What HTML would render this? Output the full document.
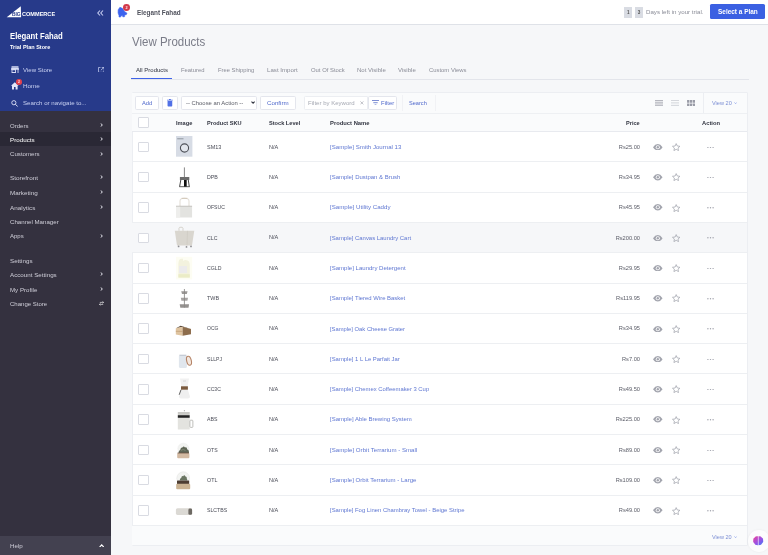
<!DOCTYPE html>
<html><head><meta charset="utf-8"><title>View Products</title>
<style>
*{margin:0;padding:0;box-sizing:border-box}
html,body{width:768px;height:555px;overflow:hidden;background:#f6f7f9;font-family:"Liberation Sans", sans-serif;}
.t{position:absolute;white-space:nowrap;line-height:1;}
.a{position:absolute}
</style></head>
<body>
<div class="a" style="left:0px;top:0px;width:111px;height:555px;background:#34313f;"></div>
<div class="a" style="left:0px;top:0px;width:111px;height:111.3px;background:#273a8a;"></div>
<div class="a" style="left:0px;top:132.1px;width:111px;height:14.4px;background:#2a2835;"></div>
<div class="a" style="left:0px;top:536px;width:111px;height:19px;background:#434150;"></div>
<svg class="a" style="left:6px;top:6px;will-change:transform" width="17" height="12.5" viewBox="0 0 17 12.5"><path d="M0.7 11.3 L14.8 0.2 L15.1 11.3 Z" fill="#fff"/><text x="5.9" y="10.2" font-family="Liberation Sans" font-weight="700" font-size="4.9" fill="#273a8a">BIG</text></svg>
<svg class="a" style="left:97px;top:10.3px" width="7" height="6" viewBox="0 0 7 6"><path d="M3 0.5 L0.8 3 L3 5.5 M6 0.5 L3.8 3 L6 5.5" fill="none" stroke="#c5ccf0" stroke-width="1.1"/></svg>
<svg class="a" style="left:11px;top:66px" width="8" height="7.1" viewBox="0 0 9 7.6" preserveAspectRatio="none"><path d="M0.6 0 H8.4 V0.9 H0.6Z M0.6 1.3 H8.4 L9 3.3 V4 H8.4 V7.6 H7.4 V4 H5.6 V7.6 H0.6 V4 H0 V3.3 Z M1.6 4.6 V6.4 H4.6 V4.6 Z" fill="#d7dcf5" fill-rule="evenodd"/></svg>
<svg class="a" style="left:97.9px;top:66.6px" width="6.4" height="5.8" viewBox="0 0 6.6 6.6" preserveAspectRatio="none"><path d="M2.6 0.6 H0.5 V6.1 H6.1 V3.9 M3.8 0.5 H6.1 V2.8 M6 0.6 L3 3.6" fill="none" stroke="#c9d1f2" stroke-width="0.8"/></svg>
<svg class="a" style="left:11px;top:82.4px" width="7.6" height="7.6" viewBox="0 0 7.6 7.6"><path d="M3.8 0.3 L0 3.7 H1 V7.4 H3 V4.9 H4.6 V7.4 H6.6 V3.7 H7.6 Z" fill="#e3e7fa"/></svg>
<div class="a" style="left:16.2px;top:79.2px;width:5.4px;height:5.4px;background:#e0424f;border-radius:50%;"></div>
<svg class="a" style="left:11.1px;top:99.6px" width="7.3" height="7" viewBox="0 0 8 8"><circle cx="3.1" cy="3.1" r="2.4" fill="none" stroke="#e3e7fa" stroke-width="1"/><path d="M4.9 4.9 L7.5 7.5" stroke="#e3e7fa" stroke-width="1.1"/></svg>
<svg class="a" style="left:99.5px;top:122.6px" width="3.2" height="4" viewBox="0 0 3.2 4"><path d="M0.7 0.5 L2.4 2 L0.7 3.5" fill="none" stroke="#e2e2ea" stroke-width="1"/></svg>
<svg class="a" style="left:99.5px;top:136.8px" width="3.2" height="4" viewBox="0 0 3.2 4"><path d="M0.7 0.5 L2.4 2 L0.7 3.5" fill="none" stroke="#e2e2ea" stroke-width="1"/></svg>
<svg class="a" style="left:99.5px;top:151.5px" width="3.2" height="4" viewBox="0 0 3.2 4"><path d="M0.7 0.5 L2.4 2 L0.7 3.5" fill="none" stroke="#e2e2ea" stroke-width="1"/></svg>
<svg class="a" style="left:99.5px;top:175.3px" width="3.2" height="4" viewBox="0 0 3.2 4"><path d="M0.7 0.5 L2.4 2 L0.7 3.5" fill="none" stroke="#e2e2ea" stroke-width="1"/></svg>
<svg class="a" style="left:99.5px;top:189.9px" width="3.2" height="4" viewBox="0 0 3.2 4"><path d="M0.7 0.5 L2.4 2 L0.7 3.5" fill="none" stroke="#e2e2ea" stroke-width="1"/></svg>
<svg class="a" style="left:99.5px;top:204.6px" width="3.2" height="4" viewBox="0 0 3.2 4"><path d="M0.7 0.5 L2.4 2 L0.7 3.5" fill="none" stroke="#e2e2ea" stroke-width="1"/></svg>
<svg class="a" style="left:99.5px;top:233.5px" width="3.2" height="4" viewBox="0 0 3.2 4"><path d="M0.7 0.5 L2.4 2 L0.7 3.5" fill="none" stroke="#e2e2ea" stroke-width="1"/></svg>
<svg class="a" style="left:99.5px;top:272.4px" width="3.2" height="4" viewBox="0 0 3.2 4"><path d="M0.7 0.5 L2.4 2 L0.7 3.5" fill="none" stroke="#e2e2ea" stroke-width="1"/></svg>
<svg class="a" style="left:99.5px;top:286.7px" width="3.2" height="4" viewBox="0 0 3.2 4"><path d="M0.7 0.5 L2.4 2 L0.7 3.5" fill="none" stroke="#e2e2ea" stroke-width="1"/></svg>
<svg class="a" style="left:98.6px;top:301.3px" width="5" height="5" viewBox="0 0 5 5"><path d="M0.4 3.4 H4.2 M1.4 2.4 L0.4 3.4 L1.4 4.4 M4.6 1.4 H0.8 M3.6 0.4 L4.6 1.4 L3.6 2.4" fill="none" stroke="#fff" stroke-width="0.6"/></svg>
<svg class="a" style="left:98.8px;top:543.6px" width="5.4" height="3.8" viewBox="0 0 5.4 3.8"><path d="M0.6 3.2 L2.7 0.9 L4.8 3.2" fill="none" stroke="#fff" stroke-width="1.1"/></svg>
<div class="a" style="left:111px;top:0px;width:657px;height:24.5px;background:#fff;border-bottom:1px solid #dfe2e8;"></div>
<svg class="a" style="left:0;top:0" width="140" height="24" viewBox="0 0 140 24"><path d="M118.2 9.8 L119.9 7.3 L122.6 8.4 L124.8 11.8 L127 13.2 L126.2 14.8 L124.4 14.9 L124.7 16.6 L122.9 16.9 L122.5 15.6 L120.7 15.9 L120.7 17 L119 17 L119 15.4 L118.1 13 Z" fill="#3d63ee" stroke="#3d63ee" stroke-width="0.6" stroke-linejoin="round"/></svg>
<div class="a" style="left:123.1px;top:3.9px;width:6.9px;height:6.9px;background:#d23a4b;border-radius:50%;"></div>
<div class="a" style="left:624px;top:6.5px;width:8.3px;height:11px;background:#d9dce3;"></div>
<div class="a" style="left:634.7px;top:6.5px;width:8.3px;height:11px;background:#d9dce3;"></div>
<div class="a" style="left:710px;top:4.3px;width:54.5px;height:15px;background:#3b60e2;border-radius:1.6px;"></div>
<div class="a" style="left:131px;top:78.8px;width:617.5px;height:0.8px;background:#e3e5eb;"></div>
<div class="a" style="left:131.2px;top:77.7px;width:40.6px;height:1.6px;background:#3f63e8;"></div>
<div class="a" style="left:131.6px;top:92.4px;width:616px;height:453.4px;background:#fff;border:1px solid #eceef2;border-radius:1px;"></div>
<div class="a" style="left:132.2px;top:93px;width:614.6px;height:38.4px;background:#fafbfc;"></div>
<div class="a" style="left:132.2px;top:112.5px;width:614.6px;height:0.7px;background:#eef0f3;"></div>
<div class="a" style="left:132.2px;top:131.1px;width:614.6px;height:0.7px;background:#e8eaef;"></div>
<div class="a" style="left:132px;top:525.6px;width:615.2px;height:19.8px;background:#fafbfc;"></div>
<div class="a" style="left:134.8px;top:95.6px;width:24.2px;height:14px;background:#fff;border:1px solid #e4e6ed;border-radius:1.6px;"></div>
<div class="a" style="left:162px;top:95.6px;width:15.5px;height:14px;background:#fff;border:1px solid #e4e6ed;border-radius:1.6px;"></div>
<div class="a" style="left:180.5px;top:95.6px;width:76.8px;height:14px;background:#fff;border:1px solid #e4e6ed;border-radius:1.6px;"></div>
<div class="a" style="left:260.2px;top:95.6px;width:35.5px;height:14px;background:#fff;border:1px solid #e4e6ed;border-radius:1.6px;"></div>
<div class="a" style="left:304.2px;top:96px;width:64px;height:13.8px;background:#fff;border:1px solid #eceef2;border-radius:1.4px 0 0 1.4px;"></div>
<div class="a" style="left:368px;top:96px;width:29.3px;height:13.8px;background:#fff;border:1px solid #e4e6ed;border-radius:1.6px;"></div>
<div class="a" style="left:401.6px;top:95px;width:0.5px;height:16px;background:#f1f2f5;"></div>
<div class="a" style="left:435.3px;top:95px;width:0.5px;height:16px;background:#f1f2f5;"></div>
<div class="a" style="left:702.5px;top:93px;width:0.6px;height:19.6px;background:#eceef2;"></div>
<svg class="a" style="left:166.9px;top:99px" width="5.8" height="7.6" viewBox="0 0 6.4 8.4"><path d="M2.2 0 H4.2 V0.7 H6.4 V1.7 H0 V0.7 H2.2 Z M0.6 2.3 H5.8 V7.6 Q5.8 8.4 5 8.4 H1.4 Q0.6 8.4 0.6 7.6 Z" fill="#5070e6"/></svg>
<svg class="a" style="left:250.8px;top:101.2px" width="4.2" height="3" viewBox="0 0 4.2 3"><path d="M0.5 0.6 L2.1 2.2 L3.7 0.6" fill="none" stroke="#313440" stroke-width="1.1"/></svg>
<svg class="a" style="left:360.2px;top:100.8px" width="3.8" height="3.8" viewBox="0 0 3.8 3.8"><path d="M0.4 0.4 L3.4 3.4 M3.4 0.4 L0.4 3.4" stroke="#9a9ca7" stroke-width="0.6"/></svg>
<svg class="a" style="left:371.6px;top:100px" width="7" height="5.4" viewBox="0 0 7 5.4"><path d="M0 0.5 H7 M1.3 2.7 H5.7 M2.6 4.9 H4.4" stroke="#5a70c8" stroke-width="0.8"/></svg>
<svg class="a" style="left:655.2px;top:99.9px" width="8.2" height="6.3" viewBox="0 0 8.2 7" preserveAspectRatio="none"><path d="M0 0.6 H8.2 M0 2.5 H8.2 M0 4.4 H8.2 M0 6.3 H8.2" stroke="#9a9ca7" stroke-width="0.8"/></svg>
<svg class="a" style="left:670.7px;top:100.2px" width="8.3" height="5.8" viewBox="0 0 8.2 6.4" preserveAspectRatio="none"><path d="M0 0.5 H8.2 M0 3.2 H8.2 M0 5.9 H8.2" stroke="#c6c8d0" stroke-width="0.8"/></svg>
<svg class="a" style="left:687px;top:99.9px" width="8.1" height="6.2" viewBox="0 0 8 6.2"><path d="M0 0 H2.3 V2.8 H0Z M2.85 0 H5.15 V2.8 H2.85Z M5.7 0 H8 V2.8 H5.7Z M0 3.4 H2.3 V6.2 H0Z M2.85 3.4 H5.15 V6.2 H2.85Z M5.7 3.4 H8 V6.2 H5.7Z" fill="#9a9ca7"/></svg>
<svg class="a" style="left:734.0px;top:102.0px" width="3.2" height="2.2" viewBox="0 0 3.2 2.2"><path d="M0.3 0.4 L1.6 1.7 L2.9 0.4" fill="none" stroke="#6f8be6" stroke-width="0.6"/></svg>
<svg class="a" style="left:734.0px;top:536.0px" width="3.2" height="2.2" viewBox="0 0 3.2 2.2"><path d="M0.3 0.4 L1.6 1.7 L2.9 0.4" fill="none" stroke="#6f8be6" stroke-width="0.6"/></svg>
<div class="a" style="left:138.2px;top:117.3px;width:10.6px;height:10.6px;background:#fff;border:1px solid #d9dbe2;border-radius:1px;"></div>
<div class="a" style="left:132px;top:222.3px;width:615.2px;height:30.3px;background:#f6f7f9;"></div>
<div class="a" style="left:132px;top:161.35000000000002px;width:615.2px;height:0.7px;background:#edeff2;"></div>
<div class="a" style="left:138.2px;top:141.60000000000002px;width:10.5px;height:10.5px;background:#fff;border:1px solid #d9dbe2;border-radius:1px;"></div>
<svg class="a" style="left:653.2px;top:143.7px" width="9.6" height="6.5" viewBox="0 0 10 6.8"><path d="M0 3.4 Q2.2 0 5 0 Q7.8 0 10 3.4 Q7.8 6.8 5 6.8 Q2.2 6.8 0 3.4 Z" fill="#a3a5ae"/><circle cx="5" cy="3.4" r="2.1" fill="#fff"/><circle cx="5" cy="3.4" r="1.25" fill="#a3a5ae"/></svg>
<svg class="a" style="left:671.9px;top:142.9px" width="8.4" height="8" viewBox="0 0 8.4 8"><path d="M4.2 0.6 L5.3 3 L7.9 3.3 L6 5.1 L6.5 7.6 L4.2 6.3 L1.9 7.6 L2.4 5.1 L0.5 3.3 L3.1 3 Z" fill="none" stroke="#9b9da7" stroke-width="0.7" stroke-linejoin="round"/></svg>
<svg class="a" style="left:707.3px;top:146.5px" width="7" height="1.6" viewBox="0 0 7 1.6"><circle cx="0.9" cy="0.8" r="0.7" fill="#9fa1ab"/><circle cx="3.5" cy="0.8" r="0.7" fill="#9fa1ab"/><circle cx="6.1" cy="0.8" r="0.7" fill="#9fa1ab"/></svg>
<svg class="a" style="left:176px;top:136.4px;overflow:visible" width="16.4" height="20.7" viewBox="0 0 16.4 20.7"><rect x="0" y="0" width="16.4" height="20.7" fill="#d7dce5"/><rect x="1.2" y="2" width="6.3" height="1.4" fill="#8f95a0" opacity=".7"/><circle cx="8.5" cy="12" r="4.1" fill="#e2e6ed" stroke="#4d5058" stroke-width="1.1"/></svg>
<div class="a" style="left:132px;top:191.65000000000003px;width:615.2px;height:0.7px;background:#edeff2;"></div>
<div class="a" style="left:138.2px;top:171.90000000000003px;width:10.5px;height:10.5px;background:#fff;border:1px solid #d9dbe2;border-radius:1px;"></div>
<svg class="a" style="left:653.2px;top:174.0px" width="9.6" height="6.5" viewBox="0 0 10 6.8"><path d="M0 3.4 Q2.2 0 5 0 Q7.8 0 10 3.4 Q7.8 6.8 5 6.8 Q2.2 6.8 0 3.4 Z" fill="#a3a5ae"/><circle cx="5" cy="3.4" r="2.1" fill="#fff"/><circle cx="5" cy="3.4" r="1.25" fill="#a3a5ae"/></svg>
<svg class="a" style="left:671.9px;top:173.2px" width="8.4" height="8" viewBox="0 0 8.4 8"><path d="M4.2 0.6 L5.3 3 L7.9 3.3 L6 5.1 L6.5 7.6 L4.2 6.3 L1.9 7.6 L2.4 5.1 L0.5 3.3 L3.1 3 Z" fill="none" stroke="#9b9da7" stroke-width="0.7" stroke-linejoin="round"/></svg>
<svg class="a" style="left:707.3px;top:176.8px" width="7" height="1.6" viewBox="0 0 7 1.6"><circle cx="0.9" cy="0.8" r="0.7" fill="#9fa1ab"/><circle cx="3.5" cy="0.8" r="0.7" fill="#9fa1ab"/><circle cx="6.1" cy="0.8" r="0.7" fill="#9fa1ab"/></svg>
<svg class="a" style="left:176px;top:166.7px;overflow:visible" width="16.4" height="20.7" viewBox="0 0 16.4 20.7"><path d="M8.4 0.4 V10" stroke="#555" stroke-width="0.7"/><rect x="3.9" y="10" width="9.4" height="3" fill="#6c6c6c"/><path d="M4.8 13 L3.6 19.6 M12.3 13 L13.3 19.6" stroke="#333" stroke-width="0.9"/><rect x="8" y="13" width="2.7" height="6.8" fill="#111"/><path d="M3.3 19.7 H13.7" stroke="#333" stroke-width="0.8"/></svg>
<div class="a" style="left:132px;top:221.95000000000002px;width:615.2px;height:0.7px;background:#edeff2;"></div>
<div class="a" style="left:138.2px;top:202.20000000000002px;width:10.5px;height:10.5px;background:#fff;border:1px solid #d9dbe2;border-radius:1px;"></div>
<svg class="a" style="left:653.2px;top:204.3px" width="9.6" height="6.5" viewBox="0 0 10 6.8"><path d="M0 3.4 Q2.2 0 5 0 Q7.8 0 10 3.4 Q7.8 6.8 5 6.8 Q2.2 6.8 0 3.4 Z" fill="#a3a5ae"/><circle cx="5" cy="3.4" r="2.1" fill="#fff"/><circle cx="5" cy="3.4" r="1.25" fill="#a3a5ae"/></svg>
<svg class="a" style="left:671.9px;top:203.5px" width="8.4" height="8" viewBox="0 0 8.4 8"><path d="M4.2 0.6 L5.3 3 L7.9 3.3 L6 5.1 L6.5 7.6 L4.2 6.3 L1.9 7.6 L2.4 5.1 L0.5 3.3 L3.1 3 Z" fill="none" stroke="#9b9da7" stroke-width="0.7" stroke-linejoin="round"/></svg>
<svg class="a" style="left:707.3px;top:207.1px" width="7" height="1.6" viewBox="0 0 7 1.6"><circle cx="0.9" cy="0.8" r="0.7" fill="#9fa1ab"/><circle cx="3.5" cy="0.8" r="0.7" fill="#9fa1ab"/><circle cx="6.1" cy="0.8" r="0.7" fill="#9fa1ab"/></svg>
<svg class="a" style="left:176px;top:197.0px;overflow:visible" width="16.4" height="20.7" viewBox="0 0 16.4 20.7"><path d="M4 9 V4 Q4 1.2 8.4 1.2 Q13 1.2 13 4 V9" fill="none" stroke="#e4dfd8" stroke-width="1.1"/><path d="M5.6 1.3 H11.4" stroke="#cfc3b3" stroke-width="0.9"/><rect x="0" y="9" width="16.1" height="11.5" fill="#e3e3e0"/><rect x="0" y="9" width="4.2" height="11.5" fill="#eeeeec"/><path d="M0 9.2 H16.1" stroke="#b8b4af" stroke-width="0.7"/></svg>
<div class="a" style="left:132px;top:252.25000000000003px;width:615.2px;height:0.7px;background:#edeff2;"></div>
<div class="a" style="left:138.2px;top:232.50000000000003px;width:10.5px;height:10.5px;background:#fff;border:1px solid #d9dbe2;border-radius:1px;"></div>
<svg class="a" style="left:653.2px;top:234.6px" width="9.6" height="6.5" viewBox="0 0 10 6.8"><path d="M0 3.4 Q2.2 0 5 0 Q7.8 0 10 3.4 Q7.8 6.8 5 6.8 Q2.2 6.8 0 3.4 Z" fill="#a3a5ae"/><circle cx="5" cy="3.4" r="2.1" fill="#fff"/><circle cx="5" cy="3.4" r="1.25" fill="#a3a5ae"/></svg>
<svg class="a" style="left:671.9px;top:233.8px" width="8.4" height="8" viewBox="0 0 8.4 8"><path d="M4.2 0.6 L5.3 3 L7.9 3.3 L6 5.1 L6.5 7.6 L4.2 6.3 L1.9 7.6 L2.4 5.1 L0.5 3.3 L3.1 3 Z" fill="none" stroke="#9b9da7" stroke-width="0.7" stroke-linejoin="round"/></svg>
<svg class="a" style="left:707.3px;top:237.4px" width="7" height="1.6" viewBox="0 0 7 1.6"><circle cx="0.9" cy="0.8" r="0.7" fill="#9fa1ab"/><circle cx="3.5" cy="0.8" r="0.7" fill="#9fa1ab"/><circle cx="6.1" cy="0.8" r="0.7" fill="#9fa1ab"/></svg>
<svg class="a" style="left:176px;top:227.3px;overflow:visible" width="16.4" height="20.7" viewBox="0 0 16.4 20.7"><path d="M3 3.9 V1.2 Q3 0.2 5 0.2 Q7 0.2 7 1.2 V3.9" fill="none" stroke="#d2cfc8" stroke-width="0.9"/><path d="M-1.2 3.8 H18.3 L16 18.6 H1 Z" fill="#d9d6cf"/><path d="M11.5 3.8 L11 18.6" stroke="#cbc8c0" stroke-width="0.6"/><circle cx="2.6" cy="19.4" r="0.9" fill="#8f8f92"/><circle cx="10.5" cy="19.9" r="0.9" fill="#8f8f92"/><circle cx="15" cy="19.4" r="0.9" fill="#8f8f92"/></svg>
<div class="a" style="left:132px;top:282.55px;width:615.2px;height:0.7px;background:#edeff2;"></div>
<div class="a" style="left:138.2px;top:262.8px;width:10.5px;height:10.5px;background:#fff;border:1px solid #d9dbe2;border-radius:1px;"></div>
<svg class="a" style="left:653.2px;top:264.9px" width="9.6" height="6.5" viewBox="0 0 10 6.8"><path d="M0 3.4 Q2.2 0 5 0 Q7.8 0 10 3.4 Q7.8 6.8 5 6.8 Q2.2 6.8 0 3.4 Z" fill="#a3a5ae"/><circle cx="5" cy="3.4" r="2.1" fill="#fff"/><circle cx="5" cy="3.4" r="1.25" fill="#a3a5ae"/></svg>
<svg class="a" style="left:671.9px;top:264.1px" width="8.4" height="8" viewBox="0 0 8.4 8"><path d="M4.2 0.6 L5.3 3 L7.9 3.3 L6 5.1 L6.5 7.6 L4.2 6.3 L1.9 7.6 L2.4 5.1 L0.5 3.3 L3.1 3 Z" fill="none" stroke="#9b9da7" stroke-width="0.7" stroke-linejoin="round"/></svg>
<svg class="a" style="left:707.3px;top:267.7px" width="7" height="1.6" viewBox="0 0 7 1.6"><circle cx="0.9" cy="0.8" r="0.7" fill="#9fa1ab"/><circle cx="3.5" cy="0.8" r="0.7" fill="#9fa1ab"/><circle cx="6.1" cy="0.8" r="0.7" fill="#9fa1ab"/></svg>
<svg class="a" style="left:176px;top:257.6px;overflow:visible" width="16.4" height="20.7" viewBox="0 0 16.4 20.7"><rect x="0" y="-1.2" width="16.2" height="22.6" fill="#fdfdf3"/><path d="M2.4 19.6 V6 Q2.4 1 5 0.8 H7 V3 Q9 1.6 11.5 2.4 Q13.8 3.2 13.8 7 V19.6 Z" fill="#f3f2de"/><rect x="3" y="8" width="8" height="7" fill="#eae8ef" opacity=".8"/><rect x="2.4" y="16.2" width="11.4" height="3.4" fill="#ebecc6"/></svg>
<div class="a" style="left:132px;top:312.84999999999997px;width:615.2px;height:0.7px;background:#edeff2;"></div>
<div class="a" style="left:138.2px;top:293.09999999999997px;width:10.5px;height:10.5px;background:#fff;border:1px solid #d9dbe2;border-radius:1px;"></div>
<svg class="a" style="left:653.2px;top:295.2px" width="9.6" height="6.5" viewBox="0 0 10 6.8"><path d="M0 3.4 Q2.2 0 5 0 Q7.8 0 10 3.4 Q7.8 6.8 5 6.8 Q2.2 6.8 0 3.4 Z" fill="#a3a5ae"/><circle cx="5" cy="3.4" r="2.1" fill="#fff"/><circle cx="5" cy="3.4" r="1.25" fill="#a3a5ae"/></svg>
<svg class="a" style="left:671.9px;top:294.4px" width="8.4" height="8" viewBox="0 0 8.4 8"><path d="M4.2 0.6 L5.3 3 L7.9 3.3 L6 5.1 L6.5 7.6 L4.2 6.3 L1.9 7.6 L2.4 5.1 L0.5 3.3 L3.1 3 Z" fill="none" stroke="#9b9da7" stroke-width="0.7" stroke-linejoin="round"/></svg>
<svg class="a" style="left:707.3px;top:298.0px" width="7" height="1.6" viewBox="0 0 7 1.6"><circle cx="0.9" cy="0.8" r="0.7" fill="#9fa1ab"/><circle cx="3.5" cy="0.8" r="0.7" fill="#9fa1ab"/><circle cx="6.1" cy="0.8" r="0.7" fill="#9fa1ab"/></svg>
<svg class="a" style="left:176px;top:287.9px;overflow:visible" width="16.4" height="20.7" viewBox="0 0 16.4 20.7"><path d="M8.4 1 V19.6" stroke="#6f6b69" stroke-width="0.7"/><path d="M5.2 3.2 H11.6 L10.8 6 H6 Z" fill="#8a8684" opacity=".85"/><path d="M4.8 9.7 H12 L11.4 12.7 H5.4 Z" fill="#8a8684" opacity=".75"/><path d="M3.7 16.2 H13.1 L12.5 19.7 H4.3 Z" fill="#8a8684" opacity=".9"/></svg>
<div class="a" style="left:132px;top:343.15000000000003px;width:615.2px;height:0.7px;background:#edeff2;"></div>
<div class="a" style="left:138.2px;top:323.40000000000003px;width:10.5px;height:10.5px;background:#fff;border:1px solid #d9dbe2;border-radius:1px;"></div>
<svg class="a" style="left:653.2px;top:325.5px" width="9.6" height="6.5" viewBox="0 0 10 6.8"><path d="M0 3.4 Q2.2 0 5 0 Q7.8 0 10 3.4 Q7.8 6.8 5 6.8 Q2.2 6.8 0 3.4 Z" fill="#a3a5ae"/><circle cx="5" cy="3.4" r="2.1" fill="#fff"/><circle cx="5" cy="3.4" r="1.25" fill="#a3a5ae"/></svg>
<svg class="a" style="left:671.9px;top:324.7px" width="8.4" height="8" viewBox="0 0 8.4 8"><path d="M4.2 0.6 L5.3 3 L7.9 3.3 L6 5.1 L6.5 7.6 L4.2 6.3 L1.9 7.6 L2.4 5.1 L0.5 3.3 L3.1 3 Z" fill="none" stroke="#9b9da7" stroke-width="0.7" stroke-linejoin="round"/></svg>
<svg class="a" style="left:707.3px;top:328.3px" width="7" height="1.6" viewBox="0 0 7 1.6"><circle cx="0.9" cy="0.8" r="0.7" fill="#9fa1ab"/><circle cx="3.5" cy="0.8" r="0.7" fill="#9fa1ab"/><circle cx="6.1" cy="0.8" r="0.7" fill="#9fa1ab"/></svg>
<svg class="a" style="left:176px;top:318.2px;overflow:visible" width="16.4" height="20.7" viewBox="0 0 16.4 20.7"><path d="M0 10.2 L4.6 7.7 L15 11 L6.6 9 Z" fill="#5b4a3a"/><path d="M-0.2 10.2 L6.6 8.8 V17.7 L-0.2 16.6 Z" fill="#dfc4a0"/><path d="M6.6 8.8 L15 11 V16.2 L6.6 17.7 Z" fill="#8d6d4c"/><path d="M-0.2 13.3 L6.6 13.4" stroke="#b8936a" stroke-width="0.6"/></svg>
<div class="a" style="left:132px;top:373.45px;width:615.2px;height:0.7px;background:#edeff2;"></div>
<div class="a" style="left:138.2px;top:353.7px;width:10.5px;height:10.5px;background:#fff;border:1px solid #d9dbe2;border-radius:1px;"></div>
<svg class="a" style="left:653.2px;top:355.8px" width="9.6" height="6.5" viewBox="0 0 10 6.8"><path d="M0 3.4 Q2.2 0 5 0 Q7.8 0 10 3.4 Q7.8 6.8 5 6.8 Q2.2 6.8 0 3.4 Z" fill="#a3a5ae"/><circle cx="5" cy="3.4" r="2.1" fill="#fff"/><circle cx="5" cy="3.4" r="1.25" fill="#a3a5ae"/></svg>
<svg class="a" style="left:671.9px;top:355.0px" width="8.4" height="8" viewBox="0 0 8.4 8"><path d="M4.2 0.6 L5.3 3 L7.9 3.3 L6 5.1 L6.5 7.6 L4.2 6.3 L1.9 7.6 L2.4 5.1 L0.5 3.3 L3.1 3 Z" fill="none" stroke="#9b9da7" stroke-width="0.7" stroke-linejoin="round"/></svg>
<svg class="a" style="left:707.3px;top:358.6px" width="7" height="1.6" viewBox="0 0 7 1.6"><circle cx="0.9" cy="0.8" r="0.7" fill="#9fa1ab"/><circle cx="3.5" cy="0.8" r="0.7" fill="#9fa1ab"/><circle cx="6.1" cy="0.8" r="0.7" fill="#9fa1ab"/></svg>
<svg class="a" style="left:176px;top:348.5px;overflow:visible" width="16.4" height="20.7" viewBox="0 0 16.4 20.7"><rect x="2.9" y="5.9" width="8" height="13.2" rx="1.6" fill="#e0e6ed"/><path d="M3.4 6.2 H10.4" stroke="#aab2bd" stroke-width="0.7"/><ellipse cx="13" cy="11.8" rx="2.3" ry="4.6" transform="rotate(-14 13 11.8)" fill="#f4e8df" stroke="#b58467" stroke-width="1.1"/></svg>
<div class="a" style="left:132px;top:403.75px;width:615.2px;height:0.7px;background:#edeff2;"></div>
<div class="a" style="left:138.2px;top:384.0px;width:10.5px;height:10.5px;background:#fff;border:1px solid #d9dbe2;border-radius:1px;"></div>
<svg class="a" style="left:653.2px;top:386.1px" width="9.6" height="6.5" viewBox="0 0 10 6.8"><path d="M0 3.4 Q2.2 0 5 0 Q7.8 0 10 3.4 Q7.8 6.8 5 6.8 Q2.2 6.8 0 3.4 Z" fill="#a3a5ae"/><circle cx="5" cy="3.4" r="2.1" fill="#fff"/><circle cx="5" cy="3.4" r="1.25" fill="#a3a5ae"/></svg>
<svg class="a" style="left:671.9px;top:385.3px" width="8.4" height="8" viewBox="0 0 8.4 8"><path d="M4.2 0.6 L5.3 3 L7.9 3.3 L6 5.1 L6.5 7.6 L4.2 6.3 L1.9 7.6 L2.4 5.1 L0.5 3.3 L3.1 3 Z" fill="none" stroke="#9b9da7" stroke-width="0.7" stroke-linejoin="round"/></svg>
<svg class="a" style="left:707.3px;top:388.9px" width="7" height="1.6" viewBox="0 0 7 1.6"><circle cx="0.9" cy="0.8" r="0.7" fill="#9fa1ab"/><circle cx="3.5" cy="0.8" r="0.7" fill="#9fa1ab"/><circle cx="6.1" cy="0.8" r="0.7" fill="#9fa1ab"/></svg>
<svg class="a" style="left:176px;top:378.8px;overflow:visible" width="16.4" height="20.7" viewBox="0 0 16.4 20.7"><path d="M4 -0.4 H13 L11.6 7.4 H5.4 Z" fill="#f1f1f1"/><path d="M5.2 10.6 L3 17.6 Q3 19.6 5 19.6 H12 Q14 19.6 14 17.6 L11.8 10.6 Z" fill="#efefef"/><rect x="5" y="7.3" width="6.9" height="3.4" fill="#7a5a3e"/><path d="M5 10.8 L3.2 15.8" stroke="#3a3a3a" stroke-width="0.8"/><path d="M7 2 H10" stroke="#cfcfcf" stroke-width="0.8"/></svg>
<div class="a" style="left:132px;top:434.05px;width:615.2px;height:0.7px;background:#edeff2;"></div>
<div class="a" style="left:138.2px;top:414.3px;width:10.5px;height:10.5px;background:#fff;border:1px solid #d9dbe2;border-radius:1px;"></div>
<svg class="a" style="left:653.2px;top:416.4px" width="9.6" height="6.5" viewBox="0 0 10 6.8"><path d="M0 3.4 Q2.2 0 5 0 Q7.8 0 10 3.4 Q7.8 6.8 5 6.8 Q2.2 6.8 0 3.4 Z" fill="#a3a5ae"/><circle cx="5" cy="3.4" r="2.1" fill="#fff"/><circle cx="5" cy="3.4" r="1.25" fill="#a3a5ae"/></svg>
<svg class="a" style="left:671.9px;top:415.6px" width="8.4" height="8" viewBox="0 0 8.4 8"><path d="M4.2 0.6 L5.3 3 L7.9 3.3 L6 5.1 L6.5 7.6 L4.2 6.3 L1.9 7.6 L2.4 5.1 L0.5 3.3 L3.1 3 Z" fill="none" stroke="#9b9da7" stroke-width="0.7" stroke-linejoin="round"/></svg>
<svg class="a" style="left:707.3px;top:419.2px" width="7" height="1.6" viewBox="0 0 7 1.6"><circle cx="0.9" cy="0.8" r="0.7" fill="#9fa1ab"/><circle cx="3.5" cy="0.8" r="0.7" fill="#9fa1ab"/><circle cx="6.1" cy="0.8" r="0.7" fill="#9fa1ab"/></svg>
<svg class="a" style="left:176px;top:409.1px;overflow:visible" width="16.4" height="20.7" viewBox="0 0 16.4 20.7"><circle cx="8.4" cy="1.7" r="0.6" fill="#aaa"/><rect x="1.8" y="3" width="11.9" height="2.9" fill="#c9c9c5"/><rect x="1.8" y="6.2" width="11.9" height="2.6" fill="#222"/><rect x="1.8" y="9" width="11.9" height="11.5" fill="#e3e3df"/><rect x="13.9" y="11.2" width="3" height="7.2" rx="0.8" fill="none" stroke="#b8b8b3" stroke-width="0.9"/></svg>
<div class="a" style="left:132px;top:464.34999999999997px;width:615.2px;height:0.7px;background:#edeff2;"></div>
<div class="a" style="left:138.2px;top:444.59999999999997px;width:10.5px;height:10.5px;background:#fff;border:1px solid #d9dbe2;border-radius:1px;"></div>
<svg class="a" style="left:653.2px;top:446.7px" width="9.6" height="6.5" viewBox="0 0 10 6.8"><path d="M0 3.4 Q2.2 0 5 0 Q7.8 0 10 3.4 Q7.8 6.8 5 6.8 Q2.2 6.8 0 3.4 Z" fill="#a3a5ae"/><circle cx="5" cy="3.4" r="2.1" fill="#fff"/><circle cx="5" cy="3.4" r="1.25" fill="#a3a5ae"/></svg>
<svg class="a" style="left:671.9px;top:445.9px" width="8.4" height="8" viewBox="0 0 8.4 8"><path d="M4.2 0.6 L5.3 3 L7.9 3.3 L6 5.1 L6.5 7.6 L4.2 6.3 L1.9 7.6 L2.4 5.1 L0.5 3.3 L3.1 3 Z" fill="none" stroke="#9b9da7" stroke-width="0.7" stroke-linejoin="round"/></svg>
<svg class="a" style="left:707.3px;top:449.5px" width="7" height="1.6" viewBox="0 0 7 1.6"><circle cx="0.9" cy="0.8" r="0.7" fill="#9fa1ab"/><circle cx="3.5" cy="0.8" r="0.7" fill="#9fa1ab"/><circle cx="6.1" cy="0.8" r="0.7" fill="#9fa1ab"/></svg>
<svg class="a" style="left:176px;top:439.4px;overflow:visible" width="16.4" height="20.7" viewBox="0 0 16.4 20.7"><ellipse cx="7.4" cy="9.6" rx="5.6" ry="5.4" fill="#f3f4f2" stroke="#e6e7e5" stroke-width="0.4"/><path d="M2.6 14.2 Q2.4 11.6 4.2 11 Q4.6 8 6.4 8.6 Q7.6 6.4 9 8.4 Q11 7.4 11.2 10.4 Q13.2 10.6 13 14.2 Z" fill="#5f6656"/><path d="M5 11.5 Q7 9.5 9.5 11.5" stroke="#8b927f" stroke-width="0.7" fill="none"/><rect x="1.2" y="14.1" width="12.2" height="5.2" rx="1" fill="#d3baa2"/><path d="M1.6 14 H13" stroke="#6b5242" stroke-width="0.8"/></svg>
<div class="a" style="left:132px;top:494.65000000000003px;width:615.2px;height:0.7px;background:#edeff2;"></div>
<div class="a" style="left:138.2px;top:474.90000000000003px;width:10.5px;height:10.5px;background:#fff;border:1px solid #d9dbe2;border-radius:1px;"></div>
<svg class="a" style="left:653.2px;top:477.0px" width="9.6" height="6.5" viewBox="0 0 10 6.8"><path d="M0 3.4 Q2.2 0 5 0 Q7.8 0 10 3.4 Q7.8 6.8 5 6.8 Q2.2 6.8 0 3.4 Z" fill="#a3a5ae"/><circle cx="5" cy="3.4" r="2.1" fill="#fff"/><circle cx="5" cy="3.4" r="1.25" fill="#a3a5ae"/></svg>
<svg class="a" style="left:671.9px;top:476.2px" width="8.4" height="8" viewBox="0 0 8.4 8"><path d="M4.2 0.6 L5.3 3 L7.9 3.3 L6 5.1 L6.5 7.6 L4.2 6.3 L1.9 7.6 L2.4 5.1 L0.5 3.3 L3.1 3 Z" fill="none" stroke="#9b9da7" stroke-width="0.7" stroke-linejoin="round"/></svg>
<svg class="a" style="left:707.3px;top:479.8px" width="7" height="1.6" viewBox="0 0 7 1.6"><circle cx="0.9" cy="0.8" r="0.7" fill="#9fa1ab"/><circle cx="3.5" cy="0.8" r="0.7" fill="#9fa1ab"/><circle cx="6.1" cy="0.8" r="0.7" fill="#9fa1ab"/></svg>
<svg class="a" style="left:176px;top:469.7px;overflow:visible" width="16.4" height="20.7" viewBox="0 0 16.4 20.7"><ellipse cx="7.2" cy="8.2" rx="6.4" ry="6.4" fill="#f3f4f2" stroke="#e2e3e1" stroke-width="0.5"/><path d="M3.8 10.6 Q3.6 8.4 5.2 8 Q5.6 5.4 7.2 6.2 Q8.4 4 9.4 6.4 Q11 6.2 10.8 8.6 Q11.6 9.4 11 10.6 Z" fill="#6a7562"/><rect x="1" y="10.4" width="12.2" height="3.6" rx="0.6" fill="#4d3d32"/><rect x="0.2" y="13.8" width="14" height="5.5" rx="1" fill="#cab292"/></svg>
<div class="a" style="left:132px;top:524.9499999999999px;width:615.2px;height:0.7px;background:#edeff2;"></div>
<div class="a" style="left:138.2px;top:505.2px;width:10.5px;height:10.5px;background:#fff;border:1px solid #d9dbe2;border-radius:1px;"></div>
<svg class="a" style="left:653.2px;top:507.3px" width="9.6" height="6.5" viewBox="0 0 10 6.8"><path d="M0 3.4 Q2.2 0 5 0 Q7.8 0 10 3.4 Q7.8 6.8 5 6.8 Q2.2 6.8 0 3.4 Z" fill="#a3a5ae"/><circle cx="5" cy="3.4" r="2.1" fill="#fff"/><circle cx="5" cy="3.4" r="1.25" fill="#a3a5ae"/></svg>
<svg class="a" style="left:671.9px;top:506.5px" width="8.4" height="8" viewBox="0 0 8.4 8"><path d="M4.2 0.6 L5.3 3 L7.9 3.3 L6 5.1 L6.5 7.6 L4.2 6.3 L1.9 7.6 L2.4 5.1 L0.5 3.3 L3.1 3 Z" fill="none" stroke="#9b9da7" stroke-width="0.7" stroke-linejoin="round"/></svg>
<svg class="a" style="left:707.3px;top:510.1px" width="7" height="1.6" viewBox="0 0 7 1.6"><circle cx="0.9" cy="0.8" r="0.7" fill="#9fa1ab"/><circle cx="3.5" cy="0.8" r="0.7" fill="#9fa1ab"/><circle cx="6.1" cy="0.8" r="0.7" fill="#9fa1ab"/></svg>
<svg class="a" style="left:176px;top:500.0px;overflow:visible" width="16.4" height="20.7" viewBox="0 0 16.4 20.7"><rect x="-0.1" y="8.2" width="16.2" height="6.7" rx="1.6" fill="#dbd9d4"/><rect x="12.4" y="8.6" width="3.7" height="6.2" rx="1.4" fill="#6d6963"/></svg>
<div class="a" style="left:748px;top:530.2px;width:21.5px;height:21.5px;background:#fcfcfd;border-radius:50%;box-shadow:0 0 2.5px rgba(0,0,0,0.06);"></div>
<svg class="a" style="left:753.4px;top:536px" width="10.4" height="9.6" viewBox="0 0 10.4 9.6"><defs><linearGradient id="bg" x1="0" x2="1" y1="0" y2="1"><stop offset="0" stop-color="#f0429a"/><stop offset="0.55" stop-color="#9a52e6"/><stop offset="1" stop-color="#3a7af5"/></linearGradient></defs><path d="M4.9 0.3 Q2.6 -0.2 1.7 1.6 Q0 2.2 0.3 4.2 Q-0.3 6 1.2 7.2 Q1.8 9.4 4.9 9.3 Z M5.5 0.3 Q7.8 -0.2 8.7 1.6 Q10.4 2.2 10.1 4.2 Q10.7 6 9.2 7.2 Q8.6 9.4 5.5 9.3 Z" fill="url(#bg)"/></svg>
<div class="a" style="left:0;top:0;width:768px;height:555px;will-change:transform">
<span class="t" style="font-size:6.0px;font-weight:700;color:#ffffff;top:11px;left:22.40px;transform:scaleX(0.9279);transform-origin:0 0;">COMMERCE</span>
<span class="t" style="font-size:8.6px;font-weight:700;color:#ffffff;top:32px;left:9.70px;transform:scaleX(0.8990);transform-origin:0 0;">Elegant Fahad</span>
<span class="t" style="font-size:5.6px;font-weight:700;color:#ffffff;top:45px;left:9.70px;transform:scaleX(0.9893);transform-origin:0 0;">Trial Plan Store</span>
<span class="t" style="font-size:6.2px;font-weight:400;color:#c9d1f2;top:67px;left:22.80px;transform:scaleX(0.9795);transform-origin:0 0;">View Store</span>
<span class="t" style="font-size:6.2px;font-weight:400;color:#c9d1f2;top:83px;left:22.80px;transform:scaleX(1.0233);transform-origin:0 0;">Home</span>
<span class="t" style="font-size:6.2px;font-weight:400;color:#c9d1f2;top:100px;left:22.80px;transform:scaleX(0.9924);transform-origin:0 0;">Search or navigate to...</span>
<span class="t" style="font-size:6.2px;font-weight:400;color:#cfced8;top:123px;left:9.60px;transform:scaleX(0.9724);transform-origin:0 0;">Orders</span>
<span class="t" style="font-size:6.2px;font-weight:400;color:#ffffff;top:137px;left:9.60px;transform:scaleX(1.0073);transform-origin:0 0;">Products</span>
<span class="t" style="font-size:6.2px;font-weight:400;color:#cfced8;top:151px;left:9.60px;transform:scaleX(0.9892);transform-origin:0 0;">Customers</span>
<span class="t" style="font-size:6.2px;font-weight:400;color:#cfced8;top:175px;left:9.60px;transform:scaleX(1.0342);transform-origin:0 0;">Storefront</span>
<span class="t" style="font-size:6.2px;font-weight:400;color:#cfced8;top:190px;left:9.60px;transform:scaleX(1.0194);transform-origin:0 0;">Marketing</span>
<span class="t" style="font-size:6.2px;font-weight:400;color:#cfced8;top:205px;left:9.60px;transform:scaleX(1.0216);transform-origin:0 0;">Analytics</span>
<span class="t" style="font-size:6.2px;font-weight:400;color:#cfced8;top:219px;left:9.60px;transform:scaleX(0.9898);transform-origin:0 0;">Channel Manager</span>
<span class="t" style="font-size:6.2px;font-weight:400;color:#cfced8;top:233px;left:9.60px;transform:scaleX(0.9710);transform-origin:0 0;">Apps</span>
<span class="t" style="font-size:6.2px;font-weight:400;color:#cfced8;top:258px;left:9.60px;transform:scaleX(1.0063);transform-origin:0 0;">Settings</span>
<span class="t" style="font-size:6.2px;font-weight:400;color:#cfced8;top:272px;left:9.60px;transform:scaleX(1.0057);transform-origin:0 0;">Account Settings</span>
<span class="t" style="font-size:6.2px;font-weight:400;color:#cfced8;top:287px;left:9.60px;transform:scaleX(0.9922);transform-origin:0 0;">My Profile</span>
<span class="t" style="font-size:6.2px;font-weight:400;color:#cfced8;top:301px;left:9.60px;transform:scaleX(0.9741);transform-origin:0 0;">Change Store</span>
<span class="t" style="font-size:6.2px;font-weight:400;color:#cfced8;top:543px;left:9.60px;transform:scaleX(0.9973);transform-origin:0 0;">Help</span>
<span class="t" style="font-size:6.4px;font-weight:700;color:#50525d;top:10px;left:136.60px;transform:scaleX(0.9980);transform-origin:0 0;">Elegant Fahad</span>
<span class="t" style="font-size:6.0px;font-weight:400;color:#8a8c97;top:9px;left:645.50px;transform:scaleX(1.0262);transform-origin:0 0;">Days left in your trial.</span>
<span class="t" style="font-size:6.6px;font-weight:700;color:#ffffff;top:9px;left:717.50px;transform:scaleX(0.9770);transform-origin:0 0;">Select a Plan</span>
<span class="t" style="font-size:4.6px;font-weight:700;color:#555;top:11px;left:627.10px;">1</span>
<span class="t" style="font-size:4.6px;font-weight:700;color:#555;top:11px;left:637.70px;">3</span>
<span class="t" style="font-size:3.8px;font-weight:700;color:#ffe3e6;top:7px;left:125.45px;">2</span>
<span class="t" style="font-size:3.4px;font-weight:700;color:#ffe3e6;top:81px;left:17.95px;">2</span>
<span class="t" style="font-size:12.9px;font-weight:400;color:#7a7c88;top:36px;left:131.60px;transform:scaleX(0.8920);transform-origin:0 0;">View Products</span>
<span class="t" style="font-size:5.9px;font-weight:400;color:#313440;top:68px;left:135.75px;transform:scaleX(1.0179);transform-origin:0 0;">All Products</span>
<span class="t" style="font-size:5.9px;font-weight:400;color:#8a8c97;top:68px;left:180.50px;transform:scaleX(0.9967);transform-origin:0 0;">Featured</span>
<span class="t" style="font-size:5.9px;font-weight:400;color:#8a8c97;top:68px;left:217.50px;transform:scaleX(0.9881);transform-origin:0 0;">Free Shipping</span>
<span class="t" style="font-size:5.9px;font-weight:400;color:#8a8c97;top:68px;left:267.00px;transform:scaleX(1.0418);transform-origin:0 0;">Last Import</span>
<span class="t" style="font-size:5.9px;font-weight:400;color:#8a8c97;top:68px;left:310.50px;transform:scaleX(1.0009);transform-origin:0 0;">Out Of Stock</span>
<span class="t" style="font-size:5.9px;font-weight:400;color:#8a8c97;top:68px;left:356.75px;transform:scaleX(1.0245);transform-origin:0 0;">Not Visible</span>
<span class="t" style="font-size:5.9px;font-weight:400;color:#8a8c97;top:68px;left:398.00px;transform:scaleX(1.0290);transform-origin:0 0;">Visible</span>
<span class="t" style="font-size:5.9px;font-weight:400;color:#8a8c97;top:68px;left:428.50px;transform:scaleX(0.9988);transform-origin:0 0;">Custom Views</span>
<span class="t" style="font-size:5.9px;font-weight:400;color:#5069cc;top:101px;left:141.75px;transform:scaleX(0.9776);transform-origin:0 0;">Add</span>
<span class="t" style="font-size:5.9px;font-weight:400;color:#5a5c66;top:101px;left:185.75px;transform:scaleX(0.9992);transform-origin:0 0;">-- Choose an Action --</span>
<span class="t" style="font-size:5.9px;font-weight:400;color:#5069cc;top:101px;left:267.00px;transform:scaleX(1.0521);transform-origin:0 0;">Confirm</span>
<span class="t" style="font-size:5.9px;font-weight:400;color:#a6a9b3;top:101px;left:307.50px;transform:scaleX(1.0271);transform-origin:0 0;">Filter by Keyword</span>
<span class="t" style="font-size:5.9px;font-weight:400;color:#5069cc;top:101px;left:381.00px;transform:scaleX(1.0119);transform-origin:0 0;">Filter</span>
<span class="t" style="font-size:5.9px;font-weight:400;color:#5069cc;top:101px;left:409.25px;transform:scaleX(0.9506);transform-origin:0 0;">Search</span>
<span class="t" style="font-size:5.6px;font-weight:400;color:#7c8fd4;top:101px;left:711.75px;transform:scaleX(0.9968);transform-origin:0 0;">View 20</span>
<span class="t" style="font-size:5.6px;font-weight:400;color:#7c8fd4;top:535px;left:712.00px;transform:scaleX(0.9943);transform-origin:0 0;">View 20</span>
<span class="t" style="font-size:5.7px;font-weight:700;color:#313440;top:121px;left:175.80px;transform:scaleX(0.9968);transform-origin:0 0;">Image</span>
<span class="t" style="font-size:5.7px;font-weight:700;color:#313440;top:121px;left:207.00px;transform:scaleX(0.9835);transform-origin:0 0;">Product SKU</span>
<span class="t" style="font-size:5.7px;font-weight:700;color:#313440;top:121px;left:268.75px;transform:scaleX(0.9881);transform-origin:0 0;">Stock Level</span>
<span class="t" style="font-size:5.7px;font-weight:700;color:#313440;top:121px;left:329.75px;transform:scaleX(1.0243);transform-origin:0 0;">Product Name</span>
<span class="t" style="font-size:5.7px;font-weight:700;color:#313440;top:121px;left:626.25px;transform:scaleX(0.9877);transform-origin:0 0;">Price</span>
<span class="t" style="font-size:5.7px;font-weight:700;color:#313440;top:121px;left:701.75px;transform:scaleX(1.0168);transform-origin:0 0;">Action</span>
<span class="t" style="font-size:5.7px;font-weight:400;color:#4a4c57;top:145px;left:207.00px;transform:scaleX(0.9691);transform-origin:0 0;">SM13</span>
<span class="t" style="font-size:5.5px;font-weight:400;color:#4a4c57;top:145px;left:268.70px;transform:scaleX(1.0140);transform-origin:0 0;">N/A</span>
<span class="t" style="font-size:6.0px;font-weight:400;color:#5f77d2;top:144px;left:329.75px;transform:scaleX(1.0139);transform-origin:0 0;">[Sample] Smith Journal 13</span>
<span class="t" style="font-size:5.7px;font-weight:400;color:#5a5c67;top:145px;right:128.00px;">Rs25.00</span>
<span class="t" style="font-size:5.7px;font-weight:400;color:#4a4c57;top:175px;left:207.00px;transform:scaleX(0.9228);transform-origin:0 0;">DPB</span>
<span class="t" style="font-size:5.5px;font-weight:400;color:#4a4c57;top:175px;left:268.70px;transform:scaleX(1.0140);transform-origin:0 0;">N/A</span>
<span class="t" style="font-size:6.0px;font-weight:400;color:#5f77d2;top:174px;left:329.75px;transform:scaleX(0.9936);transform-origin:0 0;">[Sample] Dustpan &amp; Brush</span>
<span class="t" style="font-size:5.7px;font-weight:400;color:#5a5c67;top:175px;right:128.00px;">Rs34.95</span>
<span class="t" style="font-size:5.7px;font-weight:400;color:#4a4c57;top:205px;left:207.00px;transform:scaleX(0.8992);transform-origin:0 0;">OFSUC</span>
<span class="t" style="font-size:5.5px;font-weight:400;color:#4a4c57;top:205px;left:268.70px;transform:scaleX(1.0140);transform-origin:0 0;">N/A</span>
<span class="t" style="font-size:6.0px;font-weight:400;color:#5f77d2;top:204px;left:329.75px;transform:scaleX(1.0257);transform-origin:0 0;">[Sample] Utility Caddy</span>
<span class="t" style="font-size:5.7px;font-weight:400;color:#5a5c67;top:205px;right:128.00px;">Rs45.95</span>
<span class="t" style="font-size:5.7px;font-weight:400;color:#4a4c57;top:236px;left:207.00px;transform:scaleX(0.9130);transform-origin:0 0;">CLC</span>
<span class="t" style="font-size:5.5px;font-weight:400;color:#4a4c57;top:235px;left:268.70px;transform:scaleX(1.0140);transform-origin:0 0;">N/A</span>
<span class="t" style="font-size:6.0px;font-weight:400;color:#5f77d2;top:235px;left:329.75px;transform:scaleX(0.9878);transform-origin:0 0;">[Sample] Canvas Laundry Cart</span>
<span class="t" style="font-size:5.7px;font-weight:400;color:#5a5c67;top:236px;right:128.00px;">Rs200.00</span>
<span class="t" style="font-size:5.7px;font-weight:400;color:#4a4c57;top:266px;left:207.00px;transform:scaleX(0.9107);transform-origin:0 0;">CGLD</span>
<span class="t" style="font-size:5.5px;font-weight:400;color:#4a4c57;top:266px;left:268.70px;transform:scaleX(1.0140);transform-origin:0 0;">N/A</span>
<span class="t" style="font-size:6.0px;font-weight:400;color:#5f77d2;top:265px;left:329.75px;transform:scaleX(1.0080);transform-origin:0 0;">[Sample] Laundry Detergent</span>
<span class="t" style="font-size:5.7px;font-weight:400;color:#5a5c67;top:266px;right:128.00px;">Rs29.95</span>
<span class="t" style="font-size:5.7px;font-weight:400;color:#4a4c57;top:296px;left:207.00px;transform:scaleX(0.9493);transform-origin:0 0;">TWB</span>
<span class="t" style="font-size:5.5px;font-weight:400;color:#4a4c57;top:296px;left:268.70px;transform:scaleX(1.0140);transform-origin:0 0;">N/A</span>
<span class="t" style="font-size:6.0px;font-weight:400;color:#5f77d2;top:295px;left:329.75px;transform:scaleX(0.9897);transform-origin:0 0;">[Sample] Tiered Wire Basket</span>
<span class="t" style="font-size:5.7px;font-weight:400;color:#5a5c67;top:296px;right:128.00px;">Rs119.95</span>
<span class="t" style="font-size:5.7px;font-weight:400;color:#4a4c57;top:326px;left:207.00px;transform:scaleX(0.8867);transform-origin:0 0;">OCG</span>
<span class="t" style="font-size:5.5px;font-weight:400;color:#4a4c57;top:326px;left:268.70px;transform:scaleX(1.0140);transform-origin:0 0;">N/A</span>
<span class="t" style="font-size:6.0px;font-weight:400;color:#5f77d2;top:326px;left:329.75px;transform:scaleX(0.9700);transform-origin:0 0;">[Sample] Oak Cheese Grater</span>
<span class="t" style="font-size:5.7px;font-weight:400;color:#5a5c67;top:326px;right:128.00px;">Rs34.95</span>
<span class="t" style="font-size:5.7px;font-weight:400;color:#4a4c57;top:357px;left:207.00px;transform:scaleX(0.8947);transform-origin:0 0;">SLLPJ</span>
<span class="t" style="font-size:5.5px;font-weight:400;color:#4a4c57;top:357px;left:268.70px;transform:scaleX(1.0140);transform-origin:0 0;">N/A</span>
<span class="t" style="font-size:6.0px;font-weight:400;color:#5f77d2;top:356px;left:329.75px;transform:scaleX(0.9862);transform-origin:0 0;">[Sample] 1 L Le Parfait Jar</span>
<span class="t" style="font-size:5.7px;font-weight:400;color:#5a5c67;top:357px;right:128.00px;">Rs7.00</span>
<span class="t" style="font-size:5.7px;font-weight:400;color:#4a4c57;top:387px;left:207.00px;transform:scaleX(0.8968);transform-origin:0 0;">CC3C</span>
<span class="t" style="font-size:5.5px;font-weight:400;color:#4a4c57;top:387px;left:268.70px;transform:scaleX(1.0140);transform-origin:0 0;">N/A</span>
<span class="t" style="font-size:6.0px;font-weight:400;color:#5f77d2;top:386px;left:329.75px;transform:scaleX(0.9790);transform-origin:0 0;">[Sample] Chemex Coffeemaker 3 Cup</span>
<span class="t" style="font-size:5.7px;font-weight:400;color:#5a5c67;top:387px;right:128.00px;">Rs49.50</span>
<span class="t" style="font-size:5.7px;font-weight:400;color:#4a4c57;top:417px;left:207.00px;transform:scaleX(0.9130);transform-origin:0 0;">ABS</span>
<span class="t" style="font-size:5.5px;font-weight:400;color:#4a4c57;top:417px;left:268.70px;transform:scaleX(1.0140);transform-origin:0 0;">N/A</span>
<span class="t" style="font-size:6.0px;font-weight:400;color:#5f77d2;top:416px;left:329.75px;transform:scaleX(0.9964);transform-origin:0 0;">[Sample] Able Brewing System</span>
<span class="t" style="font-size:5.7px;font-weight:400;color:#5a5c67;top:417px;right:128.00px;">Rs225.00</span>
<span class="t" style="font-size:5.7px;font-weight:400;color:#4a4c57;top:448px;left:207.00px;transform:scaleX(0.9057);transform-origin:0 0;">OTS</span>
<span class="t" style="font-size:5.5px;font-weight:400;color:#4a4c57;top:448px;left:268.70px;transform:scaleX(1.0140);transform-origin:0 0;">N/A</span>
<span class="t" style="font-size:6.0px;font-weight:400;color:#5f77d2;top:447px;left:329.75px;transform:scaleX(1.0195);transform-origin:0 0;">[Sample] Orbit Terrarium - Small</span>
<span class="t" style="font-size:5.7px;font-weight:400;color:#5a5c67;top:448px;right:128.00px;">Rs89.00</span>
<span class="t" style="font-size:5.7px;font-weight:400;color:#4a4c57;top:478px;left:207.00px;transform:scaleX(0.9401);transform-origin:0 0;">OTL</span>
<span class="t" style="font-size:5.5px;font-weight:400;color:#4a4c57;top:478px;left:268.70px;transform:scaleX(1.0140);transform-origin:0 0;">N/A</span>
<span class="t" style="font-size:6.0px;font-weight:400;color:#5f77d2;top:477px;left:329.75px;transform:scaleX(1.0061);transform-origin:0 0;">[Sample] Orbit Terrarium - Large</span>
<span class="t" style="font-size:5.7px;font-weight:400;color:#5a5c67;top:478px;right:128.00px;">Rs109.00</span>
<span class="t" style="font-size:5.7px;font-weight:400;color:#4a4c57;top:508px;left:207.00px;transform:scaleX(0.9124);transform-origin:0 0;">SLCTBS</span>
<span class="t" style="font-size:5.5px;font-weight:400;color:#4a4c57;top:508px;left:268.70px;transform:scaleX(1.0140);transform-origin:0 0;">N/A</span>
<span class="t" style="font-size:6.0px;font-weight:400;color:#5f77d2;top:507px;left:329.75px;transform:scaleX(0.9864);transform-origin:0 0;">[Sample] Fog Linen Chambray Towel - Beige Stripe</span>
<span class="t" style="font-size:5.7px;font-weight:400;color:#5a5c67;top:508px;right:128.00px;">Rs49.00</span>
</div>
</body></html>
